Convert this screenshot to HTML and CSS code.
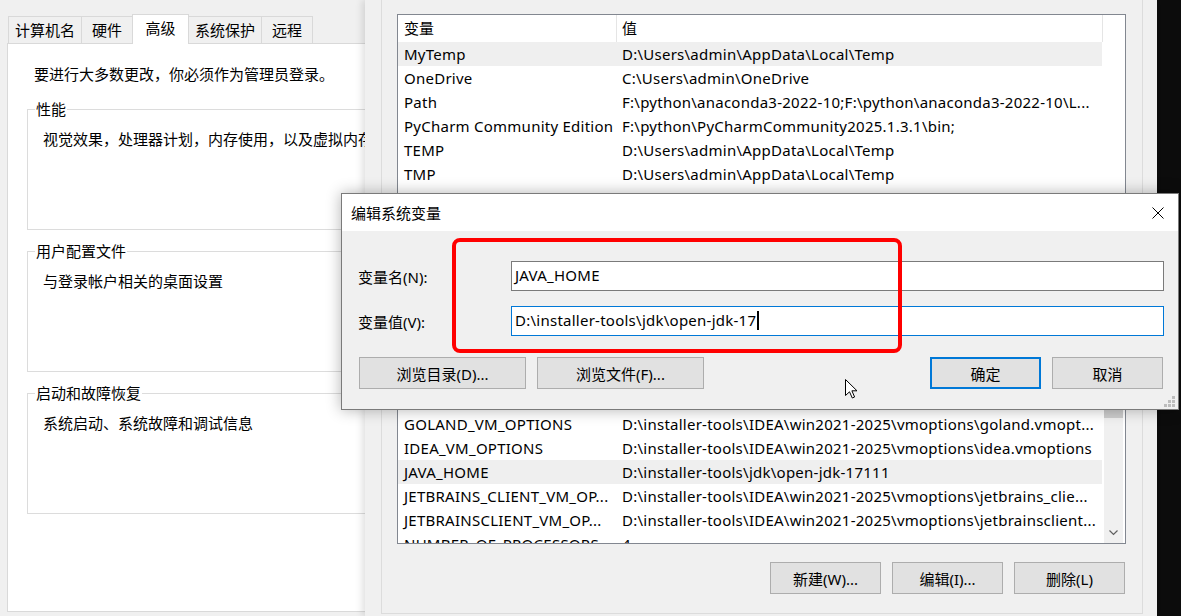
FILE: index.html
```html
<!DOCTYPE html>
<html lang="zh-CN">
<head>
    <meta charset="UTF-8">
    <title>编辑系统变量</title>
    <link rel="stylesheet" href="styles.css">
</head>
<body>
<div class="desk">
    <div class="sys-window">
        <div class="tab-strip">
            <div class="tab">计算机名</div>
            <div class="tab">硬件</div>
            <div class="tab tab-active">高级</div>
            <div class="tab">系统保护</div>
            <div class="tab">远程</div>
        </div>
        <div class="tab-panel">
            <p class="admin-note">要进行大多数更改，你必须作为管理员登录。</p>
            <fieldset class="group">
                <legend>性能</legend>
                <p>视觉效果，处理器计划，内存使用，以及虚拟内存</p>
            </fieldset>
            <fieldset class="group">
                <legend>用户配置文件</legend>
                <p>与登录帐户相关的桌面设置</p>
            </fieldset>
            <fieldset class="group">
                <legend>启动和故障恢复</legend>
                <p>系统启动、系统故障和调试信息</p>
            </fieldset>
        </div>
    </div>

    <div class="env-window">
        <div class="env-group env-group-user">
            <div class="var-list var-list-user">
                <div class="list-main">
                    <div class="list-head">
                        <div class="head-name">变量</div>
                        <div class="head-value">值</div>
                    </div>
                    <div class="row row-hot"><div class="cell-name">MyTemp</div><div class="cell-value">D:\Users\admin\AppData\Local\Temp</div></div>
                    <div class="row"><div class="cell-name">OneDrive</div><div class="cell-value">C:\Users\admin\OneDrive</div></div>
                    <div class="row"><div class="cell-name">Path</div><div class="cell-value">F:\python\anaconda3-2022-10;F:\python\anaconda3-2022-10\L...</div></div>
                    <div class="row"><div class="cell-name">PyCharm Community Edition</div><div class="cell-value">F:\python\PyCharmCommunity2025.1.3.1\bin;</div></div>
                    <div class="row"><div class="cell-name">TEMP</div><div class="cell-value">D:\Users\admin\AppData\Local\Temp</div></div>
                    <div class="row"><div class="cell-name">TMP</div><div class="cell-value">D:\Users\admin\AppData\Local\Temp</div></div>
                    <div class="row"><div class="cell-name">WebStorm</div><div class="cell-value">D:\installer-tools\WebStorm\bin;</div></div>
                </div>
            </div>
            <div class="env-buttons">
                <button class="btn">新建(N)...</button>
                <button class="btn">编辑(E)...</button>
                <button class="btn">删除(D)</button>
            </div>
        </div>

        <div class="env-group env-group-system">
            <div class="var-list">
                <div class="list-main">
                    <div class="list-head">
                        <div class="head-name">变量</div>
                        <div class="head-value">值</div>
                    </div>
                    <div class="list-body">
                        <div class="list-scroll">
                            <div class="row"><div class="cell-name">ComSpec</div><div class="cell-value">C:\Windows\system32\cmd.exe</div></div>
                            <div class="row"><div class="cell-name">DriverData</div><div class="cell-value">C:\Windows\System32\Drivers\DriverData</div></div>
                            <div class="row"><div class="cell-name">GOGC</div><div class="cell-value">100</div></div>
                            <div class="row"><div class="cell-name">GOLAND_VM_OPTIONS</div><div class="cell-value">D:\installer-tools\IDEA\win2021-2025\vmoptions\goland.vmopt...</div></div>
                            <div class="row"><div class="cell-name">IDEA_VM_OPTIONS</div><div class="cell-value">D:\installer-tools\IDEA\win2021-2025\vmoptions\idea.vmoptions</div></div>
                            <div class="row row-hot"><div class="cell-name">JAVA_HOME</div><div class="cell-value">D:\installer-tools\jdk\open-jdk-17111</div></div>
                            <div class="row"><div class="cell-name">JETBRAINS_CLIENT_VM_OP...</div><div class="cell-value">D:\installer-tools\IDEA\win2021-2025\vmoptions\jetbrains_clie...</div></div>
                            <div class="row"><div class="cell-name">JETBRAINSCLIENT_VM_OP...</div><div class="cell-value">D:\installer-tools\IDEA\win2021-2025\vmoptions\jetbrainsclient...</div></div>
                            <div class="row"><div class="cell-name">NUMBER_OF_PROCESSORS</div><div class="cell-value">4</div></div>
                        </div>
                    </div>
                </div>
                <div class="scrollbar">
                    <div class="scroll-up"></div>
                    <div class="scroll-thumb"></div>
                    <div class="scroll-track"></div>
                    <div class="scroll-down">
                        <svg width="9" height="6" viewBox="0 0 9 6"><path d="M0.5 0.5 L4.5 4.5 L8.5 0.5" fill="none" stroke="#606060" stroke-width="1.2"/></svg>
                    </div>
                </div>
            </div>
            <div class="env-buttons">
                <button class="btn">新建(W)...</button>
                <button class="btn">编辑(I)...</button>
                <button class="btn">删除(L)</button>
            </div>
        </div>
    </div>

    <div class="edit-dialog">
        <div class="dialog-title">
            <span>编辑系统变量</span>
            <svg class="close-icon" width="12" height="12" viewBox="0 0 12 12"><path d="M0.5 0.5 L11.5 11.5 M11.5 0.5 L0.5 11.5" stroke="#000" stroke-width="1"/></svg>
        </div>
        <div class="dialog-body">
            <div class="field-grid">
                <label class="field-label">变量名(N):</label>
                <div class="text-field">JAVA_HOME</div>
                <label class="field-label">变量值(V):</label>
                <div class="text-field text-field-focus">D:\installer-tools\jdk\open-jdk-17<span class="caret"></span></div>
            </div>
            <div class="dialog-buttons">
                <div class="btn-group">
                    <button class="btn btn-wide">浏览目录(D)...</button>
                    <button class="btn btn-wide">浏览文件(F)...</button>
                </div>
                <div class="btn-group">
                    <button class="btn btn-default">确定</button>
                    <button class="btn">取消</button>
                </div>
            </div>
        </div>
        <svg class="grip" width="12" height="11" viewBox="0 0 12 11">
            <rect x="8" y="0" width="3" height="3" fill="#bdbdbd"/>
            <rect x="4" y="4" width="3" height="3" fill="#bdbdbd"/>
            <rect x="8" y="4" width="3" height="3" fill="#bdbdbd"/>
            <rect x="0" y="8" width="3" height="3" fill="#bdbdbd"/>
            <rect x="4" y="8" width="3" height="3" fill="#bdbdbd"/>
            <rect x="8" y="8" width="3" height="3" fill="#bdbdbd"/>
        </svg>
    </div>

    <div class="mark-box"></div>

    <svg class="mouse" width="13" height="20" viewBox="0 0 13 20">
        <path d="M0.5 0.5 L0.5 16.5 L4.5 12.8 L7.3 19 L9.6 18 L6.9 11.8 L12 11.8 Z" fill="#fff" stroke="#000" stroke-width="1" stroke-linejoin="miter"/>
    </svg>
</div>
</body>
</html>
```

FILE: styles.css
```css
* {
    margin: 0;
    padding: 0;
    box-sizing: border-box;
}

body {
    width: 1181px;
    height: 616px;
    overflow: hidden;
    background-color: #0c0c0c;
    font-family: "Noto Sans", "Noto Sans CJK SC", sans-serif;
    font-size: 15px;
    color: #000;
}

.desk {
    position: relative;
    width: 1181px;
    height: 616px;
}

/* system properties window (left) */
.sys-window {
    position: absolute;
    left: 0;
    top: 0;
    width: 400px;
    height: 616px;
    background-color: #f0f0f0;
    padding-left: 7px;
}

.tab-strip {
    display: flex;
    align-items: flex-end;
    height: 44px;
    padding-left: 1px;
}

.tab {
    min-width: 52px;
    height: 27px;
    line-height: 26px;
    padding: 0 6px;
    text-align: center;
    background-color: #f0f0f0;
    border: 1px solid #d9d9d9;
    border-bottom: none;
    margin-bottom: 1px;
    margin-right: -1px;
}

.tab-active {
    min-width: 57px;
    height: 30px;
    line-height: 26px;
    background-color: #fff;
    margin-bottom: 0;
    position: relative;
    z-index: 1;
}

.tab-panel {
    margin-top: -1px;
    width: 420px;
    height: 569px;
    background-color: #fff;
    border: 1px solid #d9d9d9;
    padding: 20px 0 0 19px;
}

.admin-note {
    line-height: 20px;
    margin-left: 7px;
    margin-bottom: 15px;
    white-space: nowrap;
}

.group {
    width: 420px;
    border: 1px solid #dcdcdc;
    padding: 0 0 80px 7px;
    margin-bottom: 11px;
}

.group legend {
    padding: 0 1px;
    line-height: 20px;
}

.group p {
    line-height: 20px;
    margin-top: 10px;
    padding-left: 8px;
    white-space: nowrap;
}

/* environment variables window (right) */
.env-window {
    position: absolute;
    left: 365px;
    top: 0;
    width: 792px;
    height: 616px;
    background-color: #f0f0f0;
    padding-left: 16px;
    box-shadow: -3px 0 7px rgba(0, 0, 0, 0.12);
}

.env-group {
    width: 762px;
    border: 1px solid #dcdcdc;
    padding: 0 16px 0 15px;
}

.env-group-user {
    margin-top: -22px;
    padding-top: 35px;
    padding-bottom: 15px;
}

.env-group-system {
    margin-top: 8px;
    padding-top: 21px;
    padding-bottom: 19px;
}

.var-list {
    display: flex;
    height: 222px;
    background-color: #fff;
    border: 1px solid #828790;
}

.var-list-user {
    height: 212px;
}

.list-main {
    width: 705px;
    display: flex;
    flex-direction: column;
}

.list-head {
    display: flex;
    height: 27px;
    line-height: 27px;
    flex-shrink: 0;
}

.head-name {
    width: 219px;
    padding-left: 6px;
    border-right: 1px solid #e5e5e5;
}

.head-value {
    width: 486px;
    padding-left: 5px;
    border-right: 1px solid #e5e5e5;
}

.list-body {
    flex: 1;
    overflow: hidden;
}

.list-scroll {
    margin-top: -10px;
}

.row {
    display: flex;
    width: 704px;
    height: 24px;
    line-height: 24px;
    white-space: nowrap;
    letter-spacing: 0.25px;
}

.row-hot {
    background-color: #efefef;
}

.cell-name {
    width: 219px;
    padding-left: 6px;
    overflow: hidden;
}

.cell-value {
    flex: 1;
    padding-left: 5px;
    overflow: hidden;
}

.scrollbar {
    width: 22px;
    display: flex;
    flex-direction: column;
    padding: 0 2px 0 1px;
}

.scroll-up {
    height: 17px;
    background-color: #f0f0f0;
}

.scroll-thumb {
    height: 78px;
    background-color: #cdcdcd;
}

.scroll-track {
    flex: 1;
    background-color: #f0f0f0;
}

.scroll-down {
    height: 20px;
    background-color: #f0f0f0;
    display: flex;
    justify-content: center;
    align-items: center;
}

.env-buttons {
    display: flex;
    justify-content: flex-end;
    gap: 11px;
    margin-top: 18px;
    padding-right: 1px;
}

.btn {
    width: 111px;
    height: 32px;
    font-family: inherit;
    font-size: 15px;
    color: #000;
    background-color: #e1e1e1;
    border: 1px solid #adadad;
}

/* edit dialog */
.edit-dialog {
    position: absolute;
    left: 341px;
    top: 193px;
    width: 838px;
    height: 217px;
    background-color: #f0f0f0;
    border: 1px solid #7a7a7a;
    box-shadow: 0 0 14px rgba(0, 0, 0, 0.3);
}

.dialog-title {
    height: 37px;
    background-color: #fff;
    display: flex;
    align-items: center;
    justify-content: space-between;
    padding: 0 14px 0 9px;
}

.dialog-body {
    padding: 30px 14px 0 16px;
}

.field-grid {
    display: grid;
    grid-template-columns: 153px 1fr;
    row-gap: 15px;
    align-items: center;
}

.text-field {
    height: 30px;
    line-height: 26px;
    padding-left: 3px;
    background-color: #fff;
    border: 1px solid #7a7a7a;
    white-space: nowrap;
    letter-spacing: 0.25px;
}

.text-field-focus {
    border-color: #0078d7;
}

.caret {
    display: inline-block;
    width: 2px;
    height: 19px;
    background-color: #000;
    vertical-align: -4px;
    margin-left: 1px;
}

.dialog-buttons {
    display: flex;
    justify-content: space-between;
    margin-top: 21px;
    padding: 0 1px;
}

.btn-group {
    display: flex;
    gap: 11px;
}

.btn-wide {
    width: 167px;
}

.btn-default {
    border: 2px solid #0078d7;
}

.grip {
    position: absolute;
    right: 2px;
    bottom: 2px;
}

.mark-box {
    position: absolute;
    left: 452px;
    top: 238px;
    width: 450px;
    height: 115px;
    border: 4px solid #f00;
    border-radius: 8px;
}

.mouse {
    position: absolute;
    left: 845px;
    top: 379px;
}
```
